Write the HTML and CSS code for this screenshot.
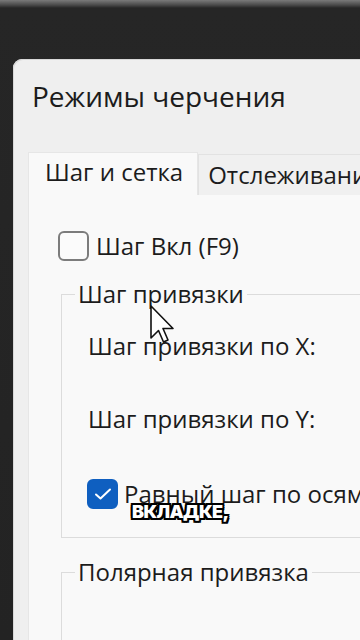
FILE: index.html
```html
<!DOCTYPE html>
<html>
<head>
<meta charset="utf-8">
<link rel="stylesheet" href="styles.css">
</head>
<body>

<div class="dialog">
  <h1 class="title">Режимы черчения</h1>

  <div class="tabs">
    <div class="tab active">Шаг и сетка</div>
    <div class="tab">Отслеживание</div>
  </div>

  <div class="panel">
    <label class="check-row top-check">
      <span class="box"></span>
      <span>Шаг Вкл (F9)</span>
    </label>

    <fieldset class="group">
      <legend>Шаг привязки</legend>
      <div class="field-row first">Шаг привязки по X:</div>
      <div class="field-row">Шаг привязки по Y:</div>
      <label class="check-row equal">
        <span class="box checked">
          <svg width="18" height="14" viewBox="0 0 18 14">
            <path d="M2 7.5 L6.5 11.5 L16 2.5" fill="none" stroke="#fff" stroke-width="2" stroke-linecap="round" stroke-linejoin="round"/>
          </svg>
        </span>
        <span>Равный шаг по осям</span>
      </label>
    </fieldset>

    <fieldset class="group polar">
      <legend>Полярная привязка</legend>
    </fieldset>
  </div>
</div>

<div class="caption">ВКЛАДКЕ,</div>

<svg class="cursor" width="24" height="40" viewBox="0 0 24 40">
  <path d="M1 1 L1 33 L8.5 25.5 L13.5 37 L18 35 L13 23.5 L23 23.5 Z" fill="#fff" stroke="#111" stroke-width="1.6" stroke-linejoin="round"/>
</svg>

</body>
</html>
```

FILE: styles.css
```css
html, body {
  margin: 0;
  height: 100%;
  overflow: hidden;
}

body {
  font-family: "Open Sans", "Noto Sans", Arial, sans-serif;
  background: linear-gradient(#7a7a7a 0, #4a4a4a 5px, #262626 8px, #232323 100%);
  color: #1c1c1c;
  position: relative;
}

.dialog {
  margin: 59px 0 0 13px;
  width: 600px;
  height: 620px;
  background-color: #efefef;
  border-top-left-radius: 9px;
  box-shadow: inset 1px 1px 0 #d8d8d8;
}

.title {
  margin: 0;
  padding: 18px 0 0 19px;
  font-size: 28px;
  font-weight: 400;
  line-height: 38px;
}

.tabs {
  display: flex;
  align-items: flex-end;
  margin: 37px 0 0 15px;
  font-size: 24px;
  line-height: 32px;
  white-space: nowrap;
}

.tab {
  padding: 4px 10px 4px 9px;
  background-color: #f0f0f0;
  border: 1px solid #e2e2e2;
  border-bottom: none;
}

.tab.active {
  background-color: #f9f9f9;
  padding: 3px 14px 7px 16px;
  border-color: #e6e6e6;
}

.panel {
  margin-left: 15px;
  height: 450px;
  background-color: #f9f9f9;
  border-left: 1px solid #e6e6e6;
  padding-top: 35px;
  font-size: 24px;
  white-space: nowrap;
}

.check-row {
  display: flex;
  align-items: center;
  gap: 7px;
  line-height: 32px;
}

.top-check {
  margin-left: 29px;
}

.box {
  width: 27px;
  height: 26px;
  border: 2px solid #7c7c7c;
  border-radius: 6px;
  background-color: #fbfbfb;
  display: flex;
  align-items: center;
  justify-content: center;
}

.box.checked {
  background-color: #0f5fc0;
  border-color: #0f5fc0;
}

.group {
  margin: 16px 0 0 32px;
  padding: 0 0 27px 26px;
  border: 1px solid #dcdcdc;
  border-right: none;
}

.group legend {
  margin-left: -13px;
  padding: 0 3px;
  line-height: 32px;
}

.field-row {
  line-height: 32px;
  margin-top: 41px;
}

.field-row.first {
  margin-top: 20px;
}

.equal {
  margin-top: 43px;
  margin-left: -1px;
  gap: 6px;
}

.polar {
  margin-top: 18px;
  height: 200px;
}

.caption {
  position: absolute;
  left: 132px;
  top: 501px;
  font-family: Inter, Roboto, sans-serif;
  font-weight: 900;
  font-size: 18px;
  letter-spacing: -0.6px;
  color: #fff;
  text-shadow:
    -2px 0 0 #000, 2px 0 0 #000, 0 -2px 0 #000, 0 2px 0 #000,
    -2px -2px 0 #000, 2px 2px 0 #000, -2px 2px 0 #000, 2px -2px 0 #000;
}

.cursor {
  position: absolute;
  left: 150px;
  top: 305px;
}
```
